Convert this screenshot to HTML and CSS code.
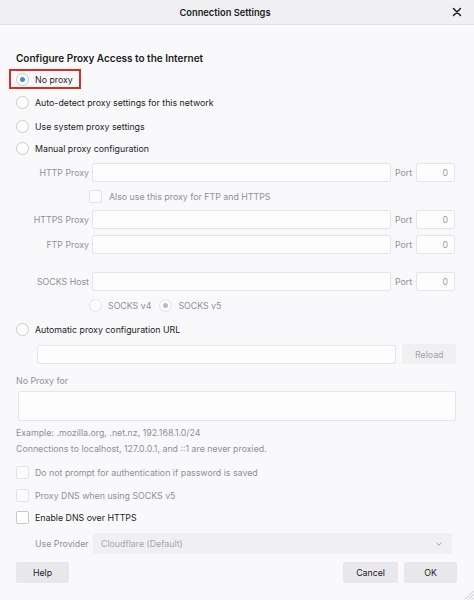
FILE: index.html
```html
<!DOCTYPE html>
<html>
<head>
<meta charset="utf-8">
<link rel="stylesheet" href="styles.css">
</head>
<body>
<div class="dialog">
  <div class="titlebar">
    <span class="title">Connection Settings</span>
    <svg class="close" width="10" height="10" viewBox="0 0 10 10"><path d="M1.5 1.5L8.5 8.5M8.5 1.5L1.5 8.5" stroke="#1c1b22" stroke-width="1.5" stroke-linecap="round"/></svg>
  </div>
  <div class="content">
    <div class="heading">Configure Proxy Access to the Internet</div>
    <div class="opt highlight"><span class="radio checked"></span><span>No proxy</span></div>
    <div class="opt"><span class="radio"></span><span>Auto-detect proxy settings for this network</span></div>
    <div class="opt sp"><span class="radio"></span><span>Use system proxy settings</span></div>
    <div class="opt"><span class="radio"></span><span>Manual proxy configuration</span></div>

    <div class="prow r-http"><span class="plabel">HTTP Proxy</span><span class="field host"></span><span class="port">Port</span><span class="field pnum">0</span></div>
    <div class="crow r-also"><span class="check dis"></span><span class="dtext">Also use this proxy for FTP and HTTPS</span></div>
    <div class="prow r-https"><span class="plabel">HTTPS Proxy</span><span class="field host"></span><span class="port">Port</span><span class="field pnum">0</span></div>
    <div class="prow r-ftp"><span class="plabel">FTP Proxy</span><span class="field host"></span><span class="port">Port</span><span class="field pnum">0</span></div>
    <div class="prow r-socks"><span class="plabel">SOCKS Host</span><span class="field host"></span><span class="port">Port</span><span class="field pnum">0</span></div>
    <div class="crow r-sv"><span class="radio dis"></span><span class="dtext v4">SOCKS v4</span><span class="radio dis dchecked"></span><span class="dtext">SOCKS v5</span></div>

    <div class="opt r-auto"><span class="radio"></span><span>Automatic proxy configuration URL</span></div>
    <div class="urlrow"><span class="field url"></span><span class="btn reload">Reload</span></div>

    <div class="noproxy">No Proxy for</div>
    <div class="field textarea"></div>
    <div class="hint h1">Example: .mozilla.org, .net.nz, 192.168.1.0/24</div>
    <div class="hint">Connections to localhost, 127.0.0.1, and ::1 are never proxied.</div>

    <div class="opt r-prompt"><span class="check dis"></span><span class="dtext">Do not prompt for authentication if password is saved</span></div>
    <div class="opt r-pdns"><span class="check dis"></span><span class="dtext">Proxy DNS when using SOCKS v5</span></div>
    <div class="opt r-doh"><span class="check"></span><span>Enable DNS over HTTPS</span></div>
    <div class="provrow"><span class="dtext provlabel">Use Provider</span><span class="select"><span>Cloudflare (Default)</span><svg width="8" height="6" viewBox="0 0 8 6"><path d="M1.5 1.8L4 4.2L6.5 1.8" fill="none" stroke="#a4a4ac" stroke-width="1"/></svg></span></div>

    <div class="buttons">
      <span class="btn">Help</span>
      <span class="spacer"></span>
      <span class="btn">Cancel</span>
      <span class="btn">OK</span>
    </div>
  </div>
  <svg class="grip" width="10" height="10" viewBox="0 0 10 10"><path d="M9.5 1L1 9.5M9.5 4.5L4.5 9.5M9.5 8L8 9.5" stroke="#b8b8be" stroke-width="0.8"/></svg>
</div>
</body>
</html>
```
FILE: styles.css
```css
html, body {
  margin: 0;
  padding: 0;
  background: #f9f9fb;
}
body {
  font-family: Inter, "Liberation Sans", sans-serif;
  font-size: 8.8px;
  color: #1c1b22;
  white-space: nowrap;
}
.dialog {
  position: relative;
  width: 474px;
  height: 600px;
  overflow: hidden;
}
.titlebar {
  height: 24px;
  box-sizing: content-box;
  padding-right: 24px;
  background: #f0f0f2;
  border-bottom: 1px solid #e2e2e6;
  display: flex;
  align-items: center;
  justify-content: center;
  position: relative;
}
.title {
  font-weight: 600;
  font-size: 9.3px;
}
.close {
  position: absolute;
  right: 12px;
  top: 7px;
}
.content {
  padding: 0 16px;
}
.heading {
  margin-top: 25px;
  height: 16px;
  line-height: 16px;
  font-weight: 600;
  font-size: 10px;
}
.opt {
  height: 22px;
  display: flex;
  align-items: center;
  gap: 6px;
}
.opt.highlight {
  width: fit-content;
  height: 16px;
  margin: 3px 0 2px -7px;
  padding: 0 6px 0 5px;
  border: 2px solid #d92d20;
}
.opt.sp { margin-top: 2px; }
.radio {
  width: 13px;
  height: 13px;
  box-sizing: border-box;
  border-radius: 50%;
  border: 1px solid #c9c9cf;
  background: #fff;
  flex: none;
  position: relative;
}
.radio.checked::after {
  content: "";
  position: absolute;
  left: 3px; top: 3px;
  width: 5px; height: 5px;
  border-radius: 50%;
  background: #3d8fe3;
}
.radio.dis {
  border-color: #e3e3e7;
  background: #fcfcfd;
}
.radio.dchecked::after {
  content: "";
  position: absolute;
  left: 3px; top: 3px;
  width: 5px; height: 5px;
  border-radius: 50%;
  background: #b3bccb;
}
.check {
  width: 13px;
  height: 13px;
  box-sizing: border-box;
  border-radius: 2px;
  border: 1px solid #c6c6cc;
  background: #fff;
  flex: none;
}
.check.dis {
  border-color: #e3e3e7;
  background: #fcfcfd;
}
.dtext { color: #8f8f98; }
.prow {
  display: flex;
  align-items: center;
  height: 19px;
  color: #8f8f98;
}
.r-http { margin-top: 4px; }
.r-https { margin-top: 4px; }
.r-ftp { margin-top: 6px; }
.r-socks { margin-top: 18px; }
.plabel {
  width: 73px;
  text-align: right;
  margin-right: 3px;
}
.field {
  box-sizing: border-box;
  border: 1px solid #e4e4e9;
  background: #fdfdfe;
  border-radius: 2px;
  height: 19px;
}
.host { width: 299px; }
.port {
  margin-left: 4px;
  width: 21px;
}
.pnum {
  width: 39px;
  text-align: right;
  padding-right: 6px;
  line-height: 17px;
  color: #9c9ca4;
}
.crow {
  display: flex;
  align-items: center;
  height: 20px;
  padding-left: 73px;
  gap: 6px;
}
.r-also { margin-top: 4px; gap: 7px; }
.r-sv { margin-top: 4px; }
.v4 { margin-right: 2px; }
.r-auto { margin-top: 4px; height: 20px; }
.urlrow {
  display: flex;
  align-items: center;
  margin-top: 5px;
  padding-left: 21px;
  gap: 6px;
}
.url { width: 359px; }
.btn {
  height: 21px;
  box-sizing: border-box;
  padding: 0 13px;
  display: inline-flex;
  align-items: center;
  justify-content: center;
  background: #e8e8ec;
  border-radius: 2px;
  min-width: 53px;
}
.btn.reload {
  height: 20px;
  min-width: 54px;
  background: #f0f0f2;
  color: #a2a2aa;
}
.noproxy {
  margin-top: 10px;
  height: 14px;
  line-height: 14px;
  color: #8f8f98;
}
.textarea {
  margin: 3px 0 0 2px;
  width: 438px;
  height: 30px;
}
.hint {
  height: 14px;
  line-height: 14px;
  margin-top: 2px;
  color: #8f8f98;
}
.hint.h1 { margin-top: 5px; }
.r-prompt { margin-top: 6px; height: 20px; }
.r-pdns { margin-top: 2px; }
.provrow {
  display: flex;
  align-items: center;
  height: 21px;
  margin-top: 5px;
  padding-left: 19px;
}
.provlabel {
  width: 58px;
}
.select {
  width: 359px;
  height: 21px;
  box-sizing: border-box;
  background: #f0f0f2;
  border-radius: 3px;
  display: flex;
  align-items: center;
  justify-content: space-between;
  padding: 0 9px 0 8px;
  color: #a6a6ae;
}
.buttons {
  display: flex;
  margin-top: 8px;
  gap: 6px;
  width: 441px;
}
.spacer { flex: 1; }
.grip {
  position: absolute;
  right: 0;
  bottom: 0;
}
```
